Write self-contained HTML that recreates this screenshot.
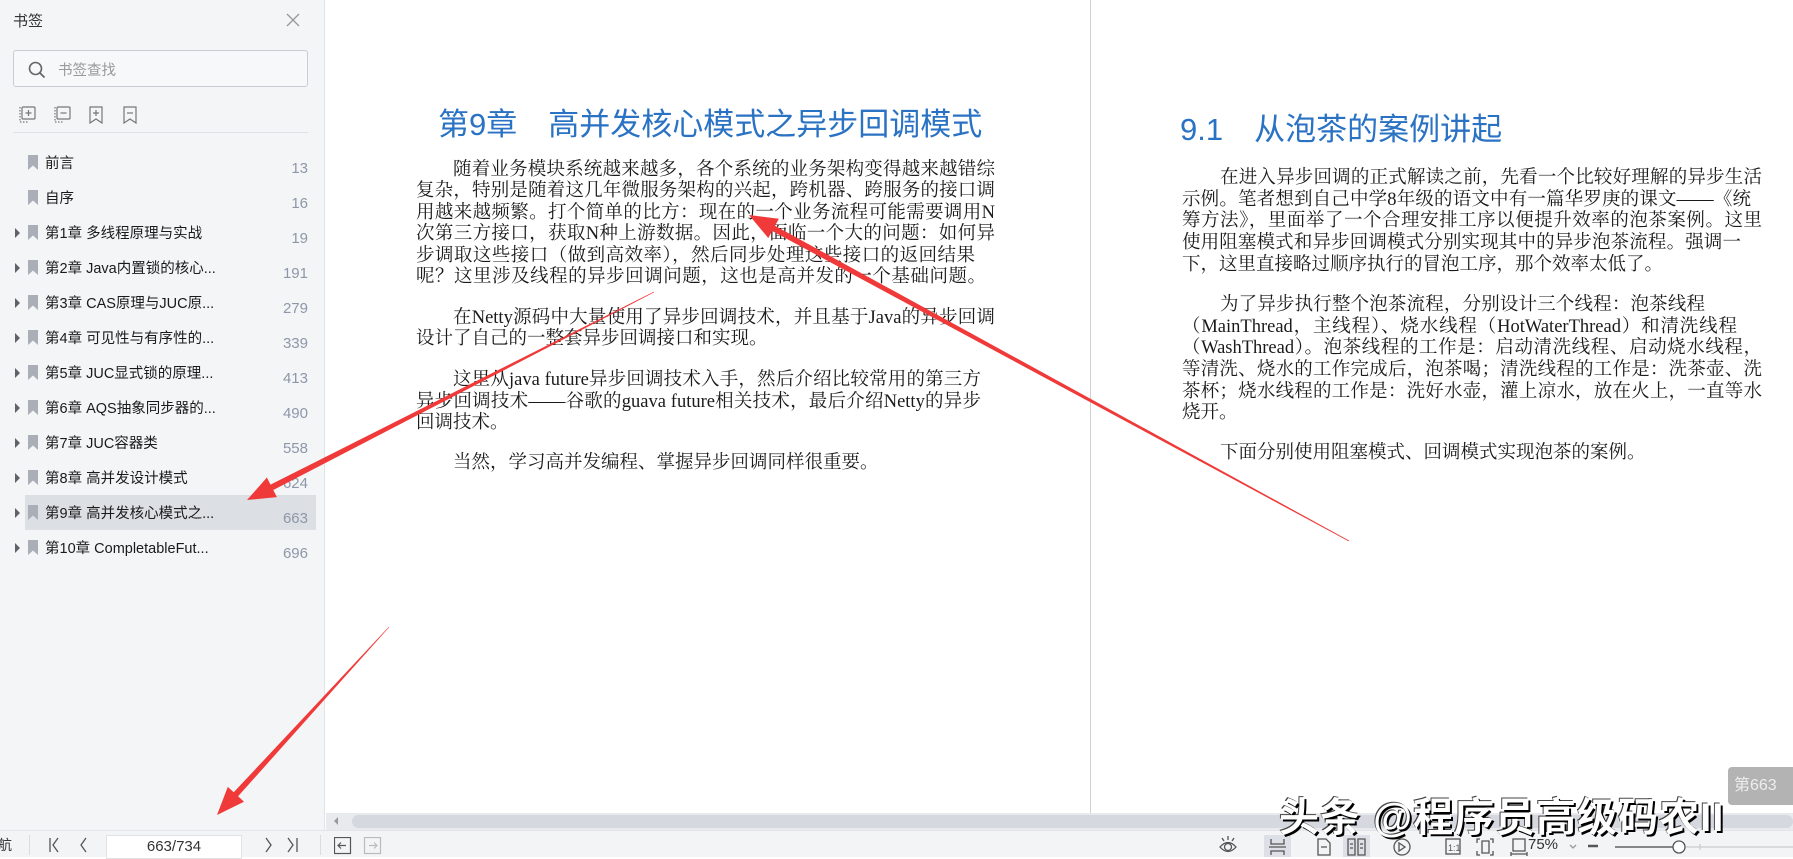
<!DOCTYPE html>
<html><head><meta charset="utf-8"><style>
*{margin:0;padding:0;box-sizing:border-box}
body{width:1793px;height:857px;overflow:hidden;position:relative;background:#fff;font-family:"Liberation Sans","Noto Sans CJK SC",sans-serif}
.abs{position:absolute}
#side{left:0;top:0;width:325px;height:830px;background:#f4f5f7;border-right:1px solid #e1e3e7}
.it{position:absolute;left:0;width:325px;height:35px;font-size:14.5px;color:#1a1a1a}
.it .t{position:absolute;left:45px;top:6px;white-space:nowrap}
.it .n{position:absolute;right:17px;top:14px;color:#8d97a8;font-size:15px}
.it .bm{position:absolute;left:28px;top:9px;width:10px;height:15px;background:#a9aeb7;clip-path:polygon(0 0,100% 0,100% 100%,50% 70%,0 100%)}
.it .tri{position:absolute;left:15px;top:12px;width:0;height:0;border-left:5px solid #5f6368;border-top:5px solid transparent;border-bottom:5px solid transparent}
.ln{position:absolute;height:22px;line-height:22px;font-size:18.5px;color:#1a1a1a;white-space:nowrap;font-family:"Liberation Serif","Noto Serif CJK SC",serif}
.j{text-align:justify;text-align-last:justify}
.h{position:absolute;color:#2a72c3;font-family:"Liberation Sans","Noto Sans CJK SC",sans-serif;white-space:nowrap}
#bar{left:0;top:830px;width:1793px;height:27px;background:#f3f4f6;border-top:1px solid #e3e5e8}
.ic{position:absolute;color:#444;font-size:15px}
</style></head><body>
<div id="side" class="abs">
  <div class="abs" style="left:13px;top:10px;font-size:15px;color:#333">书签</div>
  <svg class="abs" style="left:286px;top:13px" width="14" height="14"><path d="M1 1L13 13M13 1L1 13" stroke="#999" stroke-width="1.3"/></svg>
  <div class="abs" style="left:13px;top:50px;width:295px;height:37px;border:1px solid #c9ccd2;border-radius:3px;background:#f7f8fa"></div>
  <svg class="abs" style="left:28px;top:61px" width="18" height="18"><circle cx="7.5" cy="7.5" r="6" fill="none" stroke="#666" stroke-width="1.6"/><path d="M12 12L16.5 16.5" stroke="#666" stroke-width="1.8"/></svg>
  <div class="abs" style="left:58px;top:59px;font-size:14.5px;color:#999">书签查找</div>
  <svg class="abs" style="left:18px;top:105px" width="140" height="20" fill="none" stroke="#777" stroke-width="1.2">
    <rect x="4" y="2" width="13" height="12" rx="1"/><path d="M10.5 5v6M7.5 8h6"/><path d="M2 2v15h8" stroke-dasharray="1.5 1.5"/>
    <rect x="39" y="2" width="13" height="12" rx="1"/><path d="M42.5 8h6"/><path d="M37 2v15h8" stroke-dasharray="1.5 1.5"/>
    <path d="M72 2h12v16l-6-4-6 4z"/><path d="M78 5v6M75 8h6"/>
    <path d="M106 2h12v16l-6-4-6 4z"/><path d="M109 8h6"/>
  </svg>
  <div class="abs" style="left:13px;top:132px;width:295px;height:1px;background:#dfe1e5"></div>
  <div class="abs" style="left:25px;top:495px;width:291px;height:35px;background:#dcdfe4"></div>
  <div class="it" style="top:146px"><div class="bm"></div><div class="t">前言</div><div class="n">13</div></div>
  <div class="it" style="top:181px"><div class="bm"></div><div class="t">自序</div><div class="n">16</div></div>
  <div class="it" style="top:216px"><div class="tri"></div><div class="bm"></div><div class="t">第1章 多线程原理与实战</div><div class="n">19</div></div>
  <div class="it" style="top:251px"><div class="tri"></div><div class="bm"></div><div class="t">第2章 Java内置锁的核心...</div><div class="n">191</div></div>
  <div class="it" style="top:286px"><div class="tri"></div><div class="bm"></div><div class="t">第3章 CAS原理与JUC原...</div><div class="n">279</div></div>
  <div class="it" style="top:321px"><div class="tri"></div><div class="bm"></div><div class="t">第4章 可见性与有序性的...</div><div class="n">339</div></div>
  <div class="it" style="top:356px"><div class="tri"></div><div class="bm"></div><div class="t">第5章 JUC显式锁的原理...</div><div class="n">413</div></div>
  <div class="it" style="top:391px"><div class="tri"></div><div class="bm"></div><div class="t">第6章 AQS抽象同步器的...</div><div class="n">490</div></div>
  <div class="it" style="top:426px"><div class="tri"></div><div class="bm"></div><div class="t">第7章 JUC容器类</div><div class="n">558</div></div>
  <div class="it" style="top:461px"><div class="tri"></div><div class="bm"></div><div class="t">第8章 高并发设计模式</div><div class="n">624</div></div>
  <div class="it" style="top:496px"><div class="tri"></div><div class="bm"></div><div class="t">第9章 高并发核心模式之...</div><div class="n">663</div></div>
  <div class="it" style="top:531px"><div class="tri"></div><div class="bm"></div><div class="t">第10章 CompletableFut...</div><div class="n">696</div></div>
</div>

<div class="abs" style="left:1090px;top:0;width:1px;height:813px;background:#d0d0d0"></div>

<div class="h" style="left:438px;top:99px;font-size:31px">第9章　高并发核心模式之异步回调模式</div>
<div class="ln j" style="left:453px;width:542px;top:159px">随着业务模块系统越来越多，各个系统的业务架构变得越来越错综</div>
<div class="ln j" style="left:416px;width:579px;top:180px">复杂，特别是随着这几年微服务架构的兴起，跨机器、跨服务的接口调</div>
<div class="ln j" style="left:416px;width:579px;top:202px">用越来越频繁。打个简单的比方：现在的一个业务流程可能需要调用N</div>
<div class="ln j" style="left:416px;width:579px;top:223px">次第三方接口，获取N种上游数据。因此，面临一个大的问题：如何异</div>
<div class="ln j" style="left:416px;width:559px;top:245px">步调取这些接口（做到高效率），然后同步处理这些接口的返回结果</div>
<div class="ln j" style="left:416px;width:570px;top:266px">呢？这里涉及线程的异步回调问题，这也是高并发的一个基础问题。</div>
<div class="ln j" style="left:453px;width:542px;top:307px">在Netty源码中大量使用了异步回调技术，并且基于Java的异步回调</div>
<div class="ln" style="left:416px;top:328px">设计了自己的一整套异步回调接口和实现。</div>
<div class="ln j" style="left:453px;width:528px;top:369px">这里从java future异步回调技术入手，然后介绍比较常用的第三方</div>
<div class="ln j" style="left:416px;width:565px;top:391px">异步回调技术——谷歌的guava future相关技术，最后介绍Netty的异步</div>
<div class="ln" style="left:416px;top:412px">回调技术。</div>
<div class="ln" style="left:453px;top:452px">当然，学习高并发编程、掌握异步回调同样很重要。</div>

<div class="h" style="left:1180px;top:104px;font-size:31px">9.1　从泡茶的案例讲起</div>
<div class="ln j" style="left:1220px;width:542px;top:167px">在进入异步回调的正式解读之前，先看一个比较好理解的异步生活</div>
<div class="ln j" style="left:1182px;width:569px;top:189px">示例。笔者想到自己中学8年级的语文中有一篇华罗庚的课文——《统</div>
<div class="ln j" style="left:1182px;width:580px;top:210px">筹方法》，里面举了一个合理安排工序以便提升效率的泡茶案例。这里</div>
<div class="ln j" style="left:1182px;width:559px;top:232px">使用阻塞模式和异步回调模式分别实现其中的异步泡茶流程。强调一</div>
<div class="ln" style="left:1182px;top:254px">下，这里直接略过顺序执行的冒泡工序，那个效率太低了。</div>
<div class="ln j" style="left:1220px;width:485px;top:294px">为了异步执行整个泡茶流程，分别设计三个线程：泡茶线程</div>
<div class="ln j" style="left:1182px;width:555px;top:316px">（MainThread，主线程）、烧水线程（HotWaterThread）和清洗线程</div>
<div class="ln j" style="left:1182px;width:580px;top:337px">（WashThread）。泡茶线程的工作是：启动清洗线程、启动烧水线程，</div>
<div class="ln j" style="left:1182px;width:580px;top:359px">等清洗、烧水的工作完成后，泡茶喝；清洗线程的工作是：洗茶壶、洗</div>
<div class="ln j" style="left:1182px;width:580px;top:381px">茶杯；烧水线程的工作是：洗好水壶，灌上凉水，放在火上，一直等水</div>
<div class="ln" style="left:1182px;top:402px">烧开。</div>
<div class="ln" style="left:1220px;top:442px">下面分别使用阻塞模式、回调模式实现泡茶的案例。</div>

<div class="abs" style="left:1728px;top:767px;width:70px;height:38px;background:#b3b3b3;border-radius:4px 0 0 4px;color:#eee;font-size:16px;line-height:38px;padding-left:6px">第663</div>

<div class="abs" style="left:326px;top:813px;width:1467px;height:17px;background:#e8eaee"></div>
<div class="abs" style="left:352px;top:815px;width:1441px;height:13px;background:#d5d8df;border-radius:7px"></div>
<div class="abs" style="left:334px;top:817px;width:0;height:0;border-right:4px solid #999;border-top:4px solid transparent;border-bottom:4px solid transparent"></div>

<div id="bar" class="abs">
  <div class="ic" style="left:-2px;top:4px;font-size:14px;color:#333">航</div>
  <div class="abs" style="left:29px;top:4px;width:1px;height:20px;background:#dcdcdc"></div>
  <svg class="abs" style="left:46px;top:5px" width="260" height="18" fill="none" stroke="#555" stroke-width="1.3">
    <path d="M4 2v14M12 2l-5 7 5 7"/><path d="M40 2l-5 7 5 7"/>
    <path d="M220 2l5 7-5 7"/><path d="M242 2l5 7-5 7M251 2v14"/>
  </svg>
  <div class="abs" style="left:106px;top:4px;width:136px;height:24px;background:#fff;border:1px solid #e2e2e2;font-size:15px;color:#333;text-align:center;line-height:22px">663/734</div>
  <div class="abs" style="left:320px;top:4px;width:1px;height:20px;background:#dcdcdc"></div>
  <svg class="abs" style="left:334px;top:6px" width="50" height="18" fill="none" stroke-width="1.2">
    <rect x="0.5" y="0.5" width="16" height="16" stroke="#555"/><path d="M12 8.5H4M7 5.5l-3 3 3 3" stroke="#555"/>
    <rect x="30.5" y="0.5" width="16" height="16" stroke="#bbb"/><path d="M35 8.5h8M40 5.5l3 3-3 3" stroke="#bbb"/>
  </svg>
  <svg class="abs" style="left:1218px;top:2px" width="575" height="24" fill="none" stroke="#555" stroke-width="1.3">
    <path d="M2 14q8-9 16 0q-8 9-16 0z"/><circle cx="10" cy="14" r="3.5"/><path d="M4 5l2 3M10 3v4M16 5l-2 3"/>
    <rect x="46" y="2" width="27" height="23" fill="#dde0e6" stroke="none"/><path d="M53 6v5h13V6M53 22v-4h13v4M51 14h17"/>
    <path d="M100 6h8l4 4v12h-12z M103 14h6"/>
    <rect x="125" y="2" width="27" height="23" fill="#dde0e6" stroke="none"/><path d="M130 6h7v16h-7zM140 6h7v16h-7zM132 11h3M132 15h3M142 11h3M142 15h3"/>
    <circle cx="184" cy="14" r="8"/><path d="M181 10v8l6-4z"/>
    <rect x="228" y="6" width="14" height="15"/><text x="230" y="18" font-size="9" fill="#555" stroke="none" font-family="Liberation Sans">1:1</text>
    <path d="M262 6h-3v4M259 18v4h3M272 6h3v4M275 18v4h-3M264 8h7v12h-7z"/>
    <path d="M295 6h12v12h-12z M293 21h16M293 19v4M309 19v4"/>
    <path d="M352 12l3 3 3-3" stroke="#999"/>
    <path d="M370 13h10" stroke-width="2.5"/>
    <path d="M397 14h63" stroke="#444"/><path d="M466 14h110" stroke="#ccc"/><path d="M482 11v6" stroke="#ccc"/>
    <circle cx="461" cy="14" r="6" fill="#fff" stroke="#555"/>
  </svg>
  <div class="ic" style="left:1528px;top:5px;font-size:15px;color:#333">75%</div>
</div>

<div class="abs" style="left:1279px;top:785px;font-size:40px;font-weight:bold;color:#fff;white-space:nowrap;letter-spacing:1px;text-shadow:2px 2px 0 #000,-1px -1px 0 #444">头条 @程序员高级码农II</div>

<svg class="abs" style="left:0;top:0;pointer-events:none" width="1793" height="857">
  <g fill="#f03a3a">
    <polygon points="1349.2,540.6 775.0,225.8 778.9,218.7 749,215 768.3,238.1 772.2,231.0 1348.8,541.4"/>
    <polygon points="654,291.6 270.5,484.6 266.9,477.5 247,500 276.9,497.1 273.3,490.0 654,292.4"/>
    <polygon points="389,626.6 233.7,792.3 227.8,786.9 217,815 244.0,801.7 238.1,796.3 389,627.4"/>
  </g>
</svg>
</body></html>
